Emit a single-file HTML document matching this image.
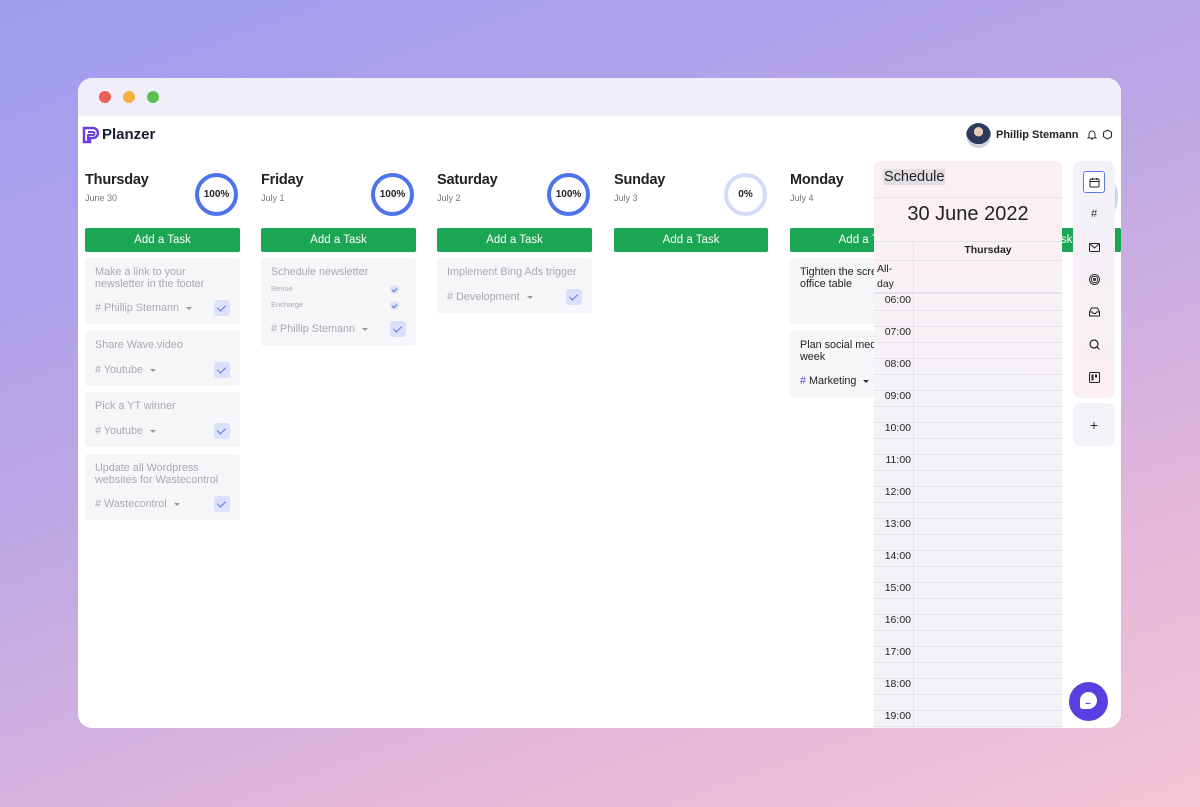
<!DOCTYPE html>
<html><head><meta charset="utf-8"><style>
*{margin:0;padding:0;box-sizing:border-box}
body{width:1200px;height:807px;overflow:hidden;font-family:"Liberation Sans",sans-serif;background:linear-gradient(160deg,#9f9cf0 0%,#b9a6e6 40%,#e2b7da 75%,#f5c6d6 100%);position:relative}
.win{position:absolute;left:78px;top:78px;width:1043px;height:650px;border-radius:14px;background:#fff;overflow:hidden}
.tb{position:absolute;left:0;top:0;width:100%;height:38px;background:#f1eefb}
.dot{position:absolute;top:13px;width:12px;height:12px;border-radius:50%}
.a{position:absolute}
.day{font-size:14.5px;font-weight:bold;color:#222;letter-spacing:-.2px}
.date{font-size:9px;color:#777}
.ring{position:absolute;width:43px;height:43px;border-radius:50%;border:4px solid #4f74ea;font-size:10px;font-weight:bold;color:#222;display:flex;align-items:center;justify-content:center}
.btn{position:absolute;height:24px;background:#1aa653;color:#fff;font-size:11.5px;display:flex;align-items:center;justify-content:center;border-radius:2px}
.card{position:absolute;background:#f6f6f9;border-radius:3px;width:155px}
.ct{position:absolute;left:10px;font-size:10.8px;color:#a9a9b1;line-height:12px}
.chk{position:absolute;width:16px;height:16px;border-radius:3px;background:#d9e1fb}
.chk:after{content:"";position:absolute;left:5px;top:3px;width:4px;height:7px;border:solid #5b76e0;border-width:0 1.5px 1.5px 0;transform:rotate(45deg)}
.sm{width:9px;height:9px;border-radius:50%}
.sm:after{left:3px;top:1.5px;width:2px;height:4px;border-width:0 1px 1px 0}
.caret{display:inline-block;width:0;height:0;border-left:3px solid transparent;border-right:3px solid transparent;border-top:3px solid #999;margin-left:7px;vertical-align:middle}
.sch{position:absolute;left:796px;top:83px;width:188px;height:580px;background:linear-gradient(#fbeff2,#f6f3f8 40%,#f3f3f8);border-radius:6px 6px 0 0;overflow:hidden}
.hl{position:absolute;left:0;width:188px;height:1px;background:#e4e2ea}
.tl{position:absolute;left:0;width:37px;text-align:right;font-size:10.5px;color:#222}
.sb{position:absolute;left:995px;top:83px;width:42px;height:237px;border-radius:8px;background:linear-gradient(#f2f1fa,#fbeff1)}
.ic{position:absolute;left:13px;width:16px;height:16px;display:flex;align-items:center;justify-content:center;font-size:11px;color:#333}
</style></head><body>
<div class="win">
<div class="tb"></div>
<div class="dot" style="left:21px;background:#ec5f57"></div>
<div class="dot" style="left:45px;background:#f2b43c"></div>
<div class="dot" style="left:69px;background:#5ec04c"></div>

<svg class="a" style="left:4px;top:48px" width="18" height="18" viewBox="0 0 18 18"><path d="M2 2h9a5 5 0 0 1 0 10H8v4H2z" fill="none" stroke="#6a3fe0" stroke-width="2.5"/><path d="M6 6h5a1.5 1.5 0 0 1 0 3H6v7" fill="none" stroke="#6a3fe0" stroke-width="2"/></svg>
<div class="a" style="left:24px;top:48px;font-size:15px;font-weight:bold;color:#1c1b33">Planzer</div>

<div class="a" style="left:888px;top:45px;width:25px;height:25px;border-radius:50%;background:radial-gradient(circle at 50% 35%,#e6c9b5 0 22%,#2c3a5c 23% 60%,#cfd5dc 61%)"></div>
<div class="a" style="left:918px;top:51px;font-size:11px;font-weight:bold;color:#222">Phillip Stemann</div>
<svg class="a" style="left:1009px;top:51px" width="10" height="11" viewBox="0 0 10 11"><path d="M2 8V5a3 3 0 0 1 6 0v3l1 1H1zM4 10h2" fill="none" stroke="#333" stroke-width="1"/></svg>
<svg class="a" style="left:1024px;top:51px" width="11" height="11" viewBox="0 0 11 11"><path d="M5.5 1l4 2.3v4.4l-4 2.3-4-2.3V3.3z" fill="none" stroke="#333" stroke-width="1.1"/></svg>

<div class="a day" style="left:7px;top:94px">Thursday</div><div class="a date" style="left:7px;top:115px">June 30</div>
<div class="ring" style="left:117px;top:95px">100%</div>
<div class="btn" style="left:7px;top:150px;width:155px">Add a Task</div>

<div class="a day" style="left:183px;top:94px">Friday</div><div class="a date" style="left:183px;top:115px">July 1</div>
<div class="ring" style="left:293px;top:95px">100%</div>
<div class="btn" style="left:183px;top:150px;width:155px">Add a Task</div>

<div class="a day" style="left:359px;top:94px">Saturday</div><div class="a date" style="left:359px;top:115px">July 2</div>
<div class="ring" style="left:469px;top:95px">100%</div>
<div class="btn" style="left:359px;top:150px;width:155px">Add a Task</div>

<div class="a day" style="left:536px;top:94px">Sunday</div><div class="a date" style="left:536px;top:115px">July 3</div>
<div class="ring" style="left:646px;top:95px;border-color:#d3dbf8">0%</div>
<div class="btn" style="left:536px;top:150px;width:154px">Add a Task</div>

<div class="a day" style="left:712px;top:94px">Monday</div><div class="a date" style="left:712px;top:115px">July 4</div>
<div class="btn" style="left:712px;top:150px;width:331px">Add a Task &nbsp;&nbsp;&nbsp;&nbsp;&nbsp;&nbsp;&nbsp;&nbsp;&nbsp;&nbsp;&nbsp;&nbsp;&nbsp;&nbsp;&nbsp;&nbsp;&nbsp;&nbsp;&nbsp;&nbsp;&nbsp;&nbsp;&nbsp;&nbsp;&nbsp;&nbsp;&nbsp;&nbsp;&nbsp;&nbsp;&nbsp;&nbsp;&nbsp;&nbsp;&nbsp;&nbsp;&nbsp;&nbsp;&nbsp;&nbsp;&nbsp;&nbsp;&nbsp;&nbsp;&nbsp;&nbsp;&nbsp;Task</div>
<div class="a" style="left:1020px;top:100px;width:20px;height:38px;border-radius:50%;background:#c9d3f4"></div>

<div class="card" style="left:7px;top:180px;height:66px"><div class="ct" style="top:8px">Make a link to your<br>newsletter in the footer</div><div class="ct" style="top:44px"># Phillip Stemann<span class="caret"></span></div><div class="chk" style="left:129px;top:42px"></div></div>
<div class="card" style="left:7px;top:253px;height:55px"><div class="ct" style="top:8px">Share Wave.video</div><div class="ct" style="top:33px"># Youtube<span class="caret"></span></div><div class="chk" style="left:129px;top:31px"></div></div>
<div class="card" style="left:7px;top:314px;height:55px"><div class="ct" style="top:8px">Pick a YT winner</div><div class="ct" style="top:33px"># Youtube<span class="caret"></span></div><div class="chk" style="left:129px;top:31px"></div></div>
<div class="card" style="left:7px;top:376px;height:66px"><div class="ct" style="top:8px">Update all Wordpress<br>websites for Wastecontrol</div><div class="ct" style="top:44px"># Wastecontrol<span class="caret"></span></div><div class="chk" style="left:129px;top:42px"></div></div>

<div class="card" style="left:183px;top:180px;height:88px"><div class="ct" style="top:8px">Schedule newsletter</div><div class="ct" style="top:25px;font-size:7.5px">Revue</div><div class="chk sm" style="left:129px;top:27px"></div><div class="ct" style="top:41px;font-size:7.5px">Encharge</div><div class="chk sm" style="left:129px;top:43px"></div><div class="ct" style="top:65px"># Phillip Stemann<span class="caret"></span></div><div class="chk" style="left:129px;top:63px"></div></div>

<div class="card" style="left:359px;top:180px;height:55px"><div class="ct" style="top:8px">Implement Bing Ads trigger</div><div class="ct" style="top:33px"># Development<span class="caret"></span></div><div class="chk" style="left:129px;top:31px"></div></div>

<div class="card" style="left:712px;top:180px;height:66px"><div class="ct" style="top:8px;color:#222">Tighten the screws<br>office table</div></div>
<div class="card" style="left:712px;top:253px;height:66px"><div class="ct" style="top:8px;color:#222">Plan social media<br>week</div><div class="ct" style="top:44px;color:#222"><span style="color:#6a3fe0">#</span> Marketing<span class="caret" style="border-top-color:#333"></span></div></div>

<div class="sch">
<div class="a" style="left:9px;top:8px;font-size:14.5px;color:#222;background:#e2dfe4;padding:0 1px">Schedule</div>
<div class="hl" style="top:36px"></div>
<div class="a" style="left:0;top:42px;width:188px;text-align:center;font-size:20px;color:#222">30 June 2022</div>
<div class="hl" style="top:80px"></div>
<div class="a" style="left:39px;top:80px;width:1px;height:500px;background:#e4e2ea"></div>
<div class="a" style="left:40px;top:83px;width:148px;text-align:center;font-size:10.5px;font-weight:bold;color:#222">Thursday</div>
<div class="hl" style="top:99px"></div>
<div class="a" style="left:3px;top:101px;font-size:10.5px;color:#222;line-height:15px">All-<br>day</div>
<div class="hl" style="top:131px;height:2px"></div>
<div class="tl" style="top:133px">06:00</div><div class="hl" style="top:149px"></div><div class="hl" style="top:165px"></div>
<div class="tl" style="top:165px">07:00</div><div class="hl" style="top:181px"></div><div class="hl" style="top:197px"></div>
<div class="tl" style="top:197px">08:00</div><div class="hl" style="top:213px"></div><div class="hl" style="top:229px"></div>
<div class="tl" style="top:229px">09:00</div><div class="hl" style="top:245px"></div><div class="hl" style="top:261px"></div>
<div class="tl" style="top:261px">10:00</div><div class="hl" style="top:277px"></div><div class="hl" style="top:293px"></div>
<div class="tl" style="top:293px">11:00</div><div class="hl" style="top:309px"></div><div class="hl" style="top:325px"></div>
<div class="tl" style="top:325px">12:00</div><div class="hl" style="top:341px"></div><div class="hl" style="top:357px"></div>
<div class="tl" style="top:357px">13:00</div><div class="hl" style="top:373px"></div><div class="hl" style="top:389px"></div>
<div class="tl" style="top:389px">14:00</div><div class="hl" style="top:405px"></div><div class="hl" style="top:421px"></div>
<div class="tl" style="top:421px">15:00</div><div class="hl" style="top:437px"></div><div class="hl" style="top:453px"></div>
<div class="tl" style="top:453px">16:00</div><div class="hl" style="top:469px"></div><div class="hl" style="top:485px"></div>
<div class="tl" style="top:485px">17:00</div><div class="hl" style="top:501px"></div><div class="hl" style="top:517px"></div>
<div class="tl" style="top:517px">18:00</div><div class="hl" style="top:533px"></div><div class="hl" style="top:549px"></div>
<div class="tl" style="top:549px">19:00</div><div class="hl" style="top:565px"></div>
</div>

<div class="sb">
<div class="ic" style="left:10px;top:10px;width:22px;height:22px;border:1.5px solid #5b7be6;border-radius:3px;background:#fff"><svg width="11" height="11" viewBox="0 0 11 11"><rect x="1" y="2" width="9" height="8" rx="1" fill="none" stroke="#222"/><path d="M1 4.5h9M3.5 1v2M7.5 1v2" stroke="#222"/></svg></div>
<div class="ic" style="top:45px">#</div>
<div class="ic" style="top:78px"><svg width="11" height="9" viewBox="0 0 11 9"><rect x=".5" y=".5" width="10" height="8" rx="1" fill="none" stroke="#222"/><path d="M1 1l4.5 4L10 1" fill="none" stroke="#222"/></svg></div>
<div class="ic" style="top:110px"><svg width="11" height="11" viewBox="0 0 11 11"><circle cx="5.5" cy="5.5" r="5" fill="none" stroke="#333"/><circle cx="5.5" cy="5.5" r="3.3" fill="none" stroke="#333"/><circle cx="5.5" cy="5.5" r="1.6" fill="#333"/></svg></div>
<div class="ic" style="top:143px"><svg width="11" height="10" viewBox="0 0 11 10"><path d="M.5 5l2-4h6l2 4v4h-10zM.5 5h3l1 1.5h2l1-1.5h3" fill="none" stroke="#222"/></svg></div>
<div class="ic" style="top:175px"><svg width="11" height="11" viewBox="0 0 11 11"><circle cx="5" cy="5" r="4" fill="none" stroke="#222" stroke-width="1.2"/><path d="M8 8l2.5 2.5" stroke="#222" stroke-width="1.2"/></svg></div>
<div class="ic" style="top:208px"><svg width="11" height="11" viewBox="0 0 11 11"><rect x=".5" y=".5" width="10" height="10" rx="1" fill="none" stroke="#222"/><rect x="2.5" y="2.5" width="2" height="6" fill="#222"/><rect x="6" y="2.5" width="2" height="3" fill="#222"/></svg></div>
</div>
<div class="a" style="left:995px;top:325px;width:42px;height:43px;border-radius:8px;background:#f4f2f8;font-size:14px;color:#333;display:flex;align-items:center;justify-content:center">+</div>

<div class="a" style="left:991px;top:604px;width:39px;height:39px;border-radius:50%;background:#5a3ee0"></div>
<div class="a" style="left:1002px;top:614px;width:17px;height:17px;border-radius:50% 50% 50% 15%;background:#fff"></div>
<div class="a" style="left:1007px;top:624px;width:6px;height:2px;border-bottom:1.5px solid #5a3ee0;border-radius:0 0 4px 4px"></div>
</div>
</body></html>
